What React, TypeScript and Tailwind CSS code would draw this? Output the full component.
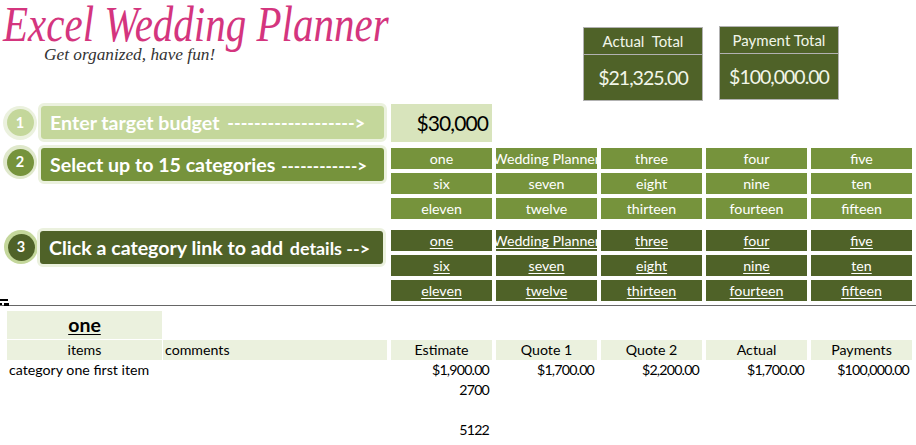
import type { ReactNode } from 'react';

const categories = ['one', 'Wedding Planner', 'three', 'four', 'five', 'six', 'seven', 'eight', 'nine', 'ten', 'eleven', 'twelve', 'thirteen', 'fourteen', 'fifteen'];

const StepCircle = ({ n, ring, fill }: { n: number; ring: string; fill: string }) => (
    <div className={`w-[34px] h-[34px] rounded-full shrink-0 flex items-center justify-center ${ring}`}>
        <div className={`w-[27px] h-[27px] rounded-full flex items-center justify-center text-white text-[14.5px] font-bold ${fill}`}>{n}</div>
    </div>
);

const Pill = ({ fill, children }: { fill: string; children: ReactNode }) => (
    <div className="w-[349px] h-[39px] border-[3px] border-[#ebf1de] rounded-[6px] shrink-0">
        <div className={`w-full h-full rounded-[3px] pl-[9px] flex items-center text-white font-bold text-[19.6px] whitespace-nowrap ${fill}`}>{children}</div>
    </div>
);

const CategoryGrid = ({ fill, link }: { fill: string; link?: boolean }) => (
    <div className="grid grid-cols-[repeat(5,101px)] auto-rows-[21px] gap-x-1 gap-y-1">
        {categories.map(name => (
            <div key={name} className={`flex items-center justify-center overflow-hidden whitespace-nowrap text-white text-[14.2px] pt-px ${fill}`}>
                <span className={link ? 'underline underline-offset-2' : ''}>{name}</span>
            </div>
        ))}
    </div>
);

const TotalBox = ({ title, value, offset }: { title: string; value: string; offset: string }) => (
    <div className={`w-[120px] h-[74px] bg-[#4f6228] border border-[#b2b2b2] text-[#f2f6e8] flex flex-col ${offset}`}>
        <div className="h-[27px] border-b border-[#b2b2b2] flex items-center justify-center text-[15px] whitespace-pre">{title}</div>
        <div className="flex-1 flex items-center justify-center text-[19.5px] tracking-[-1px]">{value}</div>
    </div>
);

const Row = ({ cells, header }: { cells: string[]; header?: boolean }) => {
    const bg = header ? 'bg-[#ebf1de]' : '';
    const align = header ? 'justify-center' : 'justify-end pr-[3px] tracking-[-0.8px]';
    return (
        <div className={`flex ml-[7px] text-[14.2px] text-black ${header ? 'h-[21px] pt-px' : 'h-[20px]'}`}>
            <div className={`w-[155px] flex items-center ${header ? 'justify-center ' + bg : 'pl-[2px] whitespace-nowrap'}`}>{cells[0]}</div>
            <div className={`w-[224px] ml-px pl-[2px] flex items-center ${bg}`}>{cells[1]}</div>
            {cells.slice(2).map((c, i) => (
                <div key={i} className={`w-[101px] ml-1 flex items-center ${align} ${bg}`}>{c}</div>
            ))}
        </div>
    );
};

export default function App() {
    return (
        <div className="w-[916px] h-[445px] bg-white overflow-hidden relative font-['Lato',sans-serif]">
            <div className="h-[103px] flex">
                <div className="w-[583px] pl-[3px] pt-[2px]">
                    <div className="font-['Liberation_Serif',serif] italic text-[41px] leading-[34px] h-[34px] text-[#d4357e] whitespace-nowrap origin-top-left scale-y-[1.25]">Excel Wedding Planner</div>
                    <div className="mt-[9px] font-['Liberation_Serif',serif] italic text-[17.3px] leading-[20px] text-[#333333] pl-[41px] whitespace-nowrap">Get organized, have fun!</div>
                </div>
                <TotalBox title="Actual  Total" value="$21,325.00" offset="mt-[27px]" />
                <TotalBox title="Payment Total" value="$100,000.00" offset="mt-[26px] ml-4" />
            </div>

            <div className="flex items-center pl-[3px] h-[39px]">
                <StepCircle n={1} ring="bg-[#ebf1de]" fill="bg-[#c4d79b]" />
                <div className="ml-px"><Pill fill="bg-[#c4d79b]"><span>Enter target budget <span className="text-[18px] ml-[3px]">-------------------&gt;</span></span></Pill></div>
                <div className="ml-1 w-[101px] h-[38px] self-start mt-px bg-[#d8e4bc] flex items-center justify-end pr-[4px] text-[21px] tracking-[-0.9px] text-black">$30,000</div>
            </div>

            <div className="flex mt-[3px] h-[82px] pl-[3px]">
                <div className="flex items-start w-[388px]">
                    <StepCircle n={2} ring="bg-[#dfe8cb]" fill="bg-[#76933c]" />
                    <div className="ml-px"><Pill fill="bg-[#76933c]"><span>Select up to 15 categories <span className="text-[17px] ml-px">------------&gt;</span></span></Pill></div>
                </div>
                <div className="pt-[3px]"><CategoryGrid fill="bg-[#76933c]" /></div>
            </div>

            <div className="flex mt-[1px] pl-[4px]">
                <div className="flex items-start w-[387px]">
                    <div className="mt-[2px]"><StepCircle n={3} ring="bg-[#c4d79b]" fill="bg-[#4f6228]" /></div>
                    <div className="-ml-px"><Pill fill="bg-[#4f6228]"><span>Click a category link to add <span className="text-[17.9px] ml-[2px]">details --&gt;</span></span></Pill></div>
                </div>
                <div className="pt-[2px]"><CategoryGrid fill="bg-[#4f6228]" link /></div>
            </div>

            <div className="relative mt-[4px] h-px bg-[#666666]">
                <div className="absolute left-0 top-[-6px] w-[8px] h-[2px] bg-black" />
                <div className="absolute left-0 top-[-2px] w-[2px] h-[2px] bg-black" />
                <div className="absolute left-[4px] top-[-2px] w-[5px] h-[3px] bg-black" />
            </div>

            <div className="ml-[7px] mt-[5px] w-[155px] h-[28px] bg-[#ebf1de] flex items-center justify-center font-bold text-[19.5px] text-black">
                <span className="underline underline-offset-2">one</span>
            </div>
            <Row header cells={['items', 'comments', 'Estimate', 'Quote 1', 'Quote 2', 'Actual', 'Payments']} />
            <Row cells={['category one first item', '', '$1,900.00', '$1,700.00', '$2,200.00', '$1,700.00', '$100,000.00']} />
            <Row cells={['', '', '2700', '', '', '', '']} />
            <Row cells={['', '', '', '', '', '', '']} />
            <Row cells={['', '', '5122', '', '', '', '']} />
        </div>
    );
}
